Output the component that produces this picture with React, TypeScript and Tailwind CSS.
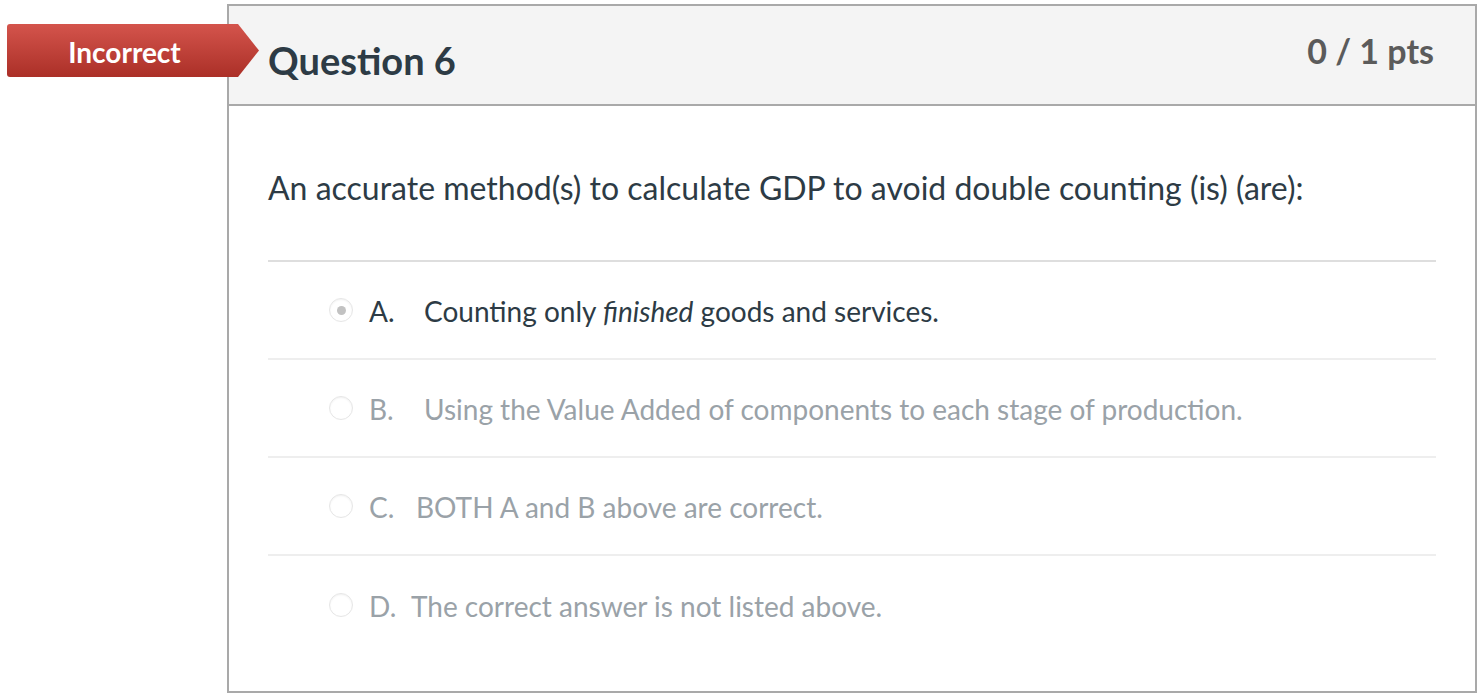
import React from "react";

type Answer = { letter: string; text: React.ReactNode; selected?: boolean; gap: string };

const ANSWERS: Answer[] = [
  {
    letter: "A.",
    selected: true,
    gap: "w-[55px]",
    text: (
      <>
        Counting only <i>finished</i> goods and services.
      </>
    ),
  },
  { letter: "B.", gap: "w-[55px]", text: "Using the Value Added of components to each stage of production." },
  { letter: "C.", gap: "w-[47px]", text: "BOTH A and B above are correct." },
  { letter: "D.", gap: "w-[42px]", text: "The correct answer is not listed above." },
];

function Radio({ selected }: { selected?: boolean }) {
  return (
    <span className="flex h-[24px] w-[24px] shrink-0 items-center justify-center rounded-full border border-[#e6e6e6] bg-white shadow-[inset_0_1px_2px_rgba(0,0,0,0.06)]">
      {selected && <span className="h-[9px] w-[9px] rounded-full bg-[#c2c2c2]" />}
    </span>
  );
}

export default function App() {
  return (
    <div
      className="relative min-h-[697px] bg-white pl-[227px] pt-[4px]"
      style={{ fontFamily: "Lato, 'Liberation Sans', sans-serif" }}
    >
      {/* Incorrect flag */}
      <div className="absolute left-[7px] top-[24px] flex h-[53px]">
        <div className="flex w-[231px] items-center justify-center rounded-l-[3px] bg-gradient-to-b from-[#d4544c] to-[#ab2f27] pl-[4px] pt-[3px] text-[28px] font-bold text-white">
          Incorrect
        </div>
        <div className="h-[53px] w-[21px] bg-gradient-to-b from-[#d4544c] to-[#ab2f27] [clip-path:polygon(0_0,100%_50%,0_100%)]" />
      </div>

      <div className="w-[1250px] border-2 border-[#a9a9a9]">
        <div className="flex h-[100px] items-start justify-between border-b-2 border-[#a9a9a9] bg-[#f4f4f4] pl-[39px] pr-[41px]">
          <h2 className="pt-[32px] text-[38px] font-bold leading-[44px] text-[#2d3b45]">Question 6</h2>
          <span className="pt-[25px] text-[34px] font-bold leading-[40px] text-[#5b5b5b]">0 / 1 pts</span>
        </div>

        <div className="px-[39px] pb-[37px]">
          <p className="border-b-2 border-[#dedede] pb-[52px] pt-[62px] text-[32px] leading-[40px] text-[#2d3b45]">
            An accurate method(s) to calculate GDP to avoid double counting (is) (are):
          </p>
          {ANSWERS.map((a, i) => (
            <div
              key={a.letter}
              className={`flex h-[98px] items-center pl-[61px] text-[28px] ${
                i < ANSWERS.length - 1 ? "border-b-2 border-[#eeeeee]" : ""
              } ${a.selected ? "text-[#2d3b45]" : "text-[#9aa2a8]"}`}
            >
              <Radio selected={a.selected} />
              <span className="ml-[16px] flex items-center pt-[2px]">
                <span className="w-[0px] whitespace-nowrap">{a.letter}</span>
                <span className={a.gap} />
                <span className="whitespace-nowrap">{a.text}</span>
              </span>
            </div>
          ))}
        </div>
      </div>
    </div>
  );
}
